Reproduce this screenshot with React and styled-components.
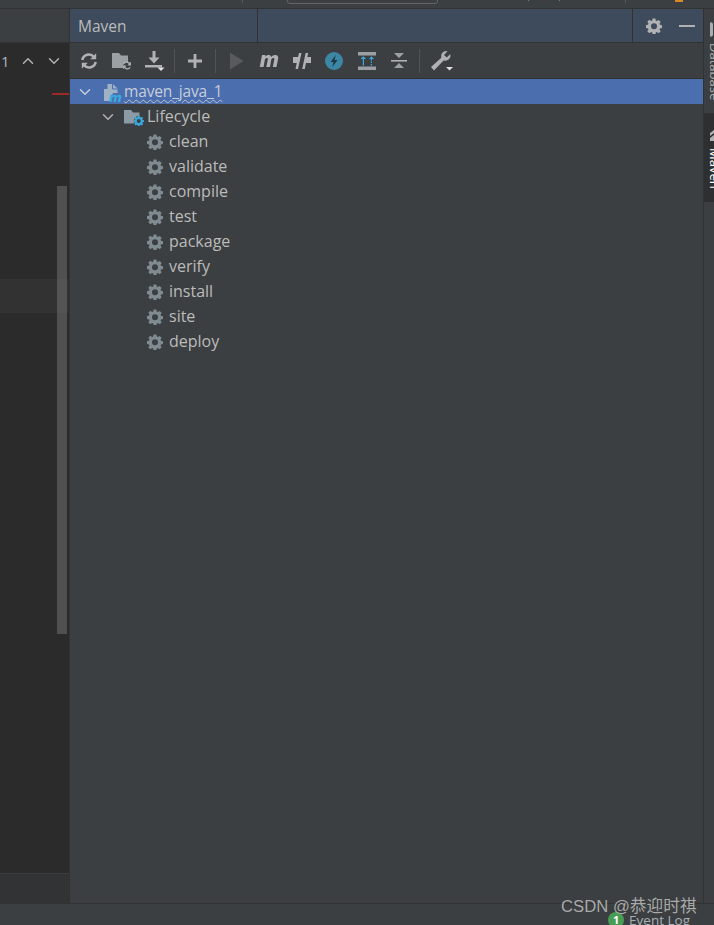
import React from "react";
import styled, { createGlobalStyle } from "styled-components";
import { ChevronDown, ChevronUp } from "lucide-react";

const GlobalStyle = createGlobalStyle`
  html, body {
    margin: 0;
    padding: 0;
    background: #3c3f41;
    overflow: hidden;
  }
`;

const Page = styled.div`
  position: relative;
  width: 714px;
  height: 925px;
  display: flex;
  flex-direction: column;
  overflow: hidden;
  background: #3c3f41;
  font-family: "Open Sans", "Noto Sans", sans-serif;
  color: #bbbbbb;
`;

const TopStrip = styled.div`
  position: relative;
  height: 8px;
  flex: none;
  background: #3c3f41;
  border-bottom: 1px solid #323232;
`;

const TopTick = styled.span`
  position: absolute;
  top: 0;
  left: ${(p) => p.$x}px;
  width: ${(p) => p.$w || 1}px;
  height: ${(p) => p.$h || 3}px;
  background: ${(p) => p.$color || "#555759"};
`;

const SearchBox = styled.div`
  position: absolute;
  left: 287px;
  top: -8px;
  width: 149px;
  height: 10px;
  border: 1px solid #646464;
  border-radius: 3px;
`;

const Main = styled.div`
  flex: 1;
  min-height: 0;
  display: flex;
`;

const EditorColumn = styled.div`
  width: 69px;
  flex: none;
  display: flex;
  flex-direction: column;
  border-right: 1px solid #323232;
`;

const EditorTabs = styled.div`
  height: 33px;
  flex: none;
  background: #3c3f41;
  border-bottom: 1px solid #323232;
`;

const EditorBar = styled.div`
  height: 35px;
  flex: none;
  background: #2b2b2b;
  display: flex;
  align-items: center;
  font-size: 15px;
  color: #a9b7c6;
  gap: 8px;
`;

const Counter = styled.span`
  margin-left: 1px;
  margin-right: 1px;
`;

const EditorBody = styled.div`
  position: relative;
  flex: 1;
  min-height: 0;
  background: #2b2b2b;
`;

const CurrentLine = styled.div`
  margin-top: 201px;
  height: 34px;
  background: #323232;
`;

const ErrorMark = styled.div`
  position: absolute;
  left: 52px;
  top: 15px;
  width: 17px;
  height: 2px;
  background: #9e2927;
`;

const Thumb = styled.div`
  position: absolute;
  left: 57px;
  top: 108px;
  width: 10px;
  height: 448px;
  background: rgba(166, 166, 166, 0.3);
`;

const EditorFooter = styled.div`
  height: 30px;
  box-sizing: border-box;
  flex: none;
  background: #313335;
  border-top: 1px solid #3a3c3e;
`;

const MavenPanel = styled.div`
  flex: 1;
  min-width: 0;
  display: flex;
  flex-direction: column;
  background: #3c3f41;
`;

const PanelHeader = styled.div`
  height: 33px;
  flex: none;
  display: flex;
  align-items: center;
  background: #3d4b5c;
  border-bottom: 1px solid #323232;
`;

const PanelTitle = styled.div`
  width: 188px;
  height: 100%;
  box-sizing: border-box;
  padding-left: 8px;
  display: flex;
  align-items: center;
  font-size: 15.5px;
  border-right: 1px solid #323232;
`;

const HeaderSpacer = styled.div`
  flex: 1;
`;

const HeaderActions = styled.div`
  width: 71px;
  height: 100%;
  display: flex;
  align-items: center;
  border-left: 1px solid #323232;
  box-sizing: border-box;
  padding-left: 13px;
  gap: 17px;
`;

const Toolbar = styled.div`
  height: 35px;
  flex: none;
  display: flex;
  align-items: center;
  padding-left: 9px;
  background: #3c3f41;
  border-bottom: 1px solid #323232;
`;

const ToolSlot = styled.div`
  width: ${(p) => p.$w}px;
  height: 24px;
  flex: none;
  display: flex;
  align-items: center;
  justify-content: center;
`;

const ToolDivider = styled.div`
  width: 1px;
  height: 24px;
  flex: none;
  margin: 0 ${(p) => p.$r}px 0 ${(p) => p.$l}px;
  background: #515355;
`;

const Tree = styled.div`
  flex: 1;
  min-height: 0;
  display: flex;
  flex-direction: column;
`;

const Row = styled.div`
  height: 25px;
  flex: none;
  display: flex;
  align-items: center;
  padding-left: ${(p) => p.$indent}px;
  font-size: 16px;
  background: ${(p) => (p.$selected ? "#4b6eaf" : "transparent")};
`;

const RowIcon = styled.span`
  width: ${(p) => p.$w}px;
  height: 20px;
  flex: none;
  display: flex;
  align-items: center;
`;

const RowLabel = styled.span`
  line-height: 20px;
  padding-bottom: 2px;
`;

const ProjectLabel = styled.span`
  font-size: 15.5px;
  line-height: 20px;
  padding-bottom: 1px;
  color: #c6cdd8;
  letter-spacing: -0.15px;
  text-decoration: underline wavy #b8c0cc 1px;
  text-underline-offset: 2px;
`;

const SideStrip = styled.div`
  width: 11px;
  box-sizing: border-box;
  flex: none;
  display: flex;
  flex-direction: column;
  overflow: hidden;
  background: #3c3f41;
  border-left: 1px solid #323232;
`;

const SideItem = styled.div`
  height: ${(p) => p.$h}px;
  flex: none;
  box-sizing: border-box;
  padding: ${(p) => p.$pad}px 0 0 2px;
  background: ${(p) => (p.$active ? "#2d2f30" : "transparent")};
  border-top: ${(p) => (p.$active ? "1px solid #323232" : "none")};
  display: flex;
  flex-direction: column;
  gap: ${(p) => p.$gap}px;
`;

const SideIcon = styled.span`
  display: block;
  flex: none;
  width: 15px;
  margin-left: 3px;
  line-height: 0;
`;

const SideText = styled.span`
  writing-mode: vertical-rl;
  font-size: 13px;
  line-height: 18px;
  width: 18px;
  color: ${(p) => (p.$active ? "#ffffff" : "#a9adb0")};
`;

const StatusBar = styled.div`
  height: 22px;
  box-sizing: border-box;
  flex: none;
  display: flex;
  align-items: flex-start;
  justify-content: flex-end;
  padding: 7px 24px 0 0;
  gap: 5px;
  background: #3c3f41;
  border-top: 1px solid #323232;
`;

const Badge = styled.span`
  width: 16px;
  height: 16px;
  margin-top: 1px;
  border-radius: 50%;
  background: #499c54;
  color: #fff;
  font-size: 11px;
  line-height: 16px;
  font-weight: 700;
  text-align: center;
`;

const StatusText = styled.span`
  font-size: 13.5px;
  line-height: 18px;
  color: #a8b0b6;
`;

const Watermark = styled.div`
  position: absolute;
  left: 561px;
  top: 895px;
  font-family: "Liberation Sans", "Noto Sans CJK SC", sans-serif;
  font-size: 16.7px;
  line-height: 24px;
  color: rgba(190, 190, 190, 0.85);
  white-space: nowrap;
`;

const GEAR_PATH =
  "M6.6 0.5h2.8l.4 2.1 1.1.5 1.8-1.2 2 2-1.2 1.8.5 1.1 2.1.4v2.8l-2.1.4-.5 1.1 1.2 1.8-2 2-1.8-1.2-1.1.5-.4 2.1H6.6l-.4-2.1-1.1-.5-1.8 1.2-2-2 1.2-1.8-.5-1.1L-.1 9.9V7.1l2.1-.4.5-1.1-1.2-1.8 2-2 1.8 1.2 1.1-.5zM8 5.3a3 3 0 1 0 0 6 3 3 0 0 0 0-6z";

const M_PATH =
  "M3 2h3.500l-.3 1.500C7.500 2.200 9 1.600 10.300 2c1 .3 1.600 1 1.800 1.900C13.500 2.400 15.200 1.600 17 2c1.800.4 2.500 1.800 2.100 3.700L17.500 14H13.800l1.500-7.600c.2-1-.1-1.500-.9-1.500-.8 0-1.700.6-2.100 1.700L11 14H7.300l1.500-7.600c.2-1-.1-1.500-.9-1.500-.8 0-1.700.6-2 1.700L4.500 14H.8z";

const GearIcon = ({ size = 16, color = "#7f8b91" }) => (
  <svg width={size} height={size} viewBox="0 0 16 16">
    <path fill={color} fillRule="evenodd" d={GEAR_PATH} />
  </svg>
);

const RefreshIcon = () => (
  <svg width="18" height="18" viewBox="0 0 18 18" fill="none" stroke="#afb1b3" strokeWidth="2.600">
    <path d="M2.300 8a6.700 6.700 0 0 1 11.600-3.200" />
    <path d="M15.700 10a6.700 6.700 0 0 1-11.600 3.200" />
    <path d="M16.200 1.200v6h-6z" fill="#afb1b3" stroke="none" />
    <path d="M1.800 16.800v-6h6z" fill="#afb1b3" stroke="none" />
  </svg>
);

const FolderRefreshIcon = () => (
  <svg width="20" height="18" viewBox="0 0 20 18">
    <path d="M0 1h7l2 2.500h7v6.500a5 5 0 0 0-5 6H0z" fill="#9aa0a4" />
    <path d="M18.200 13a3.600 3.600 0 0 0-6.400-1.400M11.800 14a3.600 3.600 0 0 0 6.400 1.400" fill="none" stroke="#afb1b3" strokeWidth="1.300" />
    <path d="M18.900 9.800v3.600h-3.400zM11.100 17.200v-3.600h3.400z" fill="#afb1b3" />
  </svg>
);

const DownloadIcon = () => (
  <svg width="20" height="20" viewBox="0 0 20 20">
    <path d="M7.500 0h3v6.500h4L9 12.500 3.500 6.500h4z" fill="#afb1b3" />
    <rect x="0" y="14" width="17" height="2.500" fill="#afb1b3" />
    <path d="M12.500 16.500h7l-3.500 3.500z" fill="#e0e0e0" />
  </svg>
);

const PlusIcon = () => (
  <svg width="14" height="14" viewBox="0 0 14 14">
    <path d="M5.600 0h2.800v5.600H14v2.800H8.400V14H5.600V8.400H0V5.600h5.600z" fill="#afb1b3" />
  </svg>
);

const PlayIcon = () => (
  <svg width="14" height="18" viewBox="0 0 14 18">
    <path d="M0 0.500 13.500 9 0 17.500z" fill="#585a5c" />
  </svg>
);

const MavenGoalIcon = () => (
  <svg width="20" height="15" viewBox="0 0 20 15">
    <path d={M_PATH} fill="#afb1b3" />
  </svg>
);

const ToggleOfflineIcon = () => (
  <svg width="18" height="16" viewBox="0 0 18 16">
    <path d="M0 4h5L6 0h2.500L5 16H2.500L3.700 10H0z" fill="#afb1b3" />
    <path d="M18 4h-3.700L15.200 0h-2.600L9.200 16h2.600l1.200-6h5z" fill="#afb1b3" />
  </svg>
);

const BoltIcon = () => (
  <svg width="18" height="18" viewBox="0 0 18 18">
    <circle cx="9" cy="9" r="9" fill="#3d87a6" />
    <path d="M10.800 3 5.500 10h3l-1.200 5 5.300-7h-3z" fill="#1c3a4a" />
  </svg>
);

const CollapseArrowsIcon = () => (
  <svg width="18" height="18" viewBox="0 0 18 18">
    <rect x="0" y="0" width="18" height="3.500" fill="#9aa0a4" />
    <rect x="0" y="14.500" width="18" height="3.500" fill="#9aa0a4" />
    <path d="M4.800 7h-2.300l2.800-2.800L8.100 7H6v6.500H4.800z" fill="#3aa7dd" />
    <path d="M13.500 4.200 16 7h-2v1.500h-1.200V7h-1.800zM12.800 9.500H14V11h-1.200zM12.800 12H14v1.500h-1.200z" fill="#3aa7dd" />
  </svg>
);

const ShowDepsIcon = () => (
  <svg width="16" height="18" viewBox="0 0 16 18">
    <path d="M0 8h16v1.600H0z" fill="#afb1b3" />
    <path d="M3 1h10L8 6zM3 16h10L8 11z" fill="#9aa0a4" />
  </svg>
);

const WrenchIcon = () => (
  <svg width="23" height="22" viewBox="0 0 23 22">
    <path
      d="M16.300 1a5.200 5.200 0 0 0-5 6.700L1 17l3 3.500 9.600-10a5.200 5.200 0 0 0 6.700-6.400L16.800 7.500 14 5l3.500-3.800z"
      fill="#afb1b3"
    />
    <path d="M16 17h7l-3.500 3.500z" fill="#e0e0e0" />
  </svg>
);

const ModuleIcon = () => (
  <svg width="20" height="20" viewBox="0 0 20 20">
    <path d="M1 7h3.500V2H10l4.500 4.500V11H10L7 19H1z" fill="#9fb3c4" />
    <path d="M9.500 2v5H14.500" fill="none" stroke="#4b6eaf" strokeWidth="1" />
    <path transform="translate(5.500 11.500) scale(0.66)" d={M_PATH} fill="#3aa7dd" />
  </svg>
);

const FolderGearIcon = () => (
  <svg width="20" height="18" viewBox="0 0 20 18">
    <path d="M0 2h7l2 2.500h6.500V8a5 5 0 0 0-5 7.500H0z" fill="#8c9aa5" />
    <g transform="translate(9.500 7.500)">
      <GearIcon size={10.5} color="#3aa7dd" />
    </g>
  </svg>
);

const DatabaseStripIcon = () => (
  <svg width="15" height="15" viewBox="0 0 15 15">
    <path d="M1 0.500h2l1 1.500v11l-1 1.500H1zM6 0.500h2l1 1.500v11l-1 1.500H6zM11 0.500h2l1 1.500v11l-1 1.500h-2z" fill="#a9adb0" />
  </svg>
);

const MavenStripIcon = () => (
  <svg width="15" height="11" viewBox="0 0 15 11">
    <path d="M1 3 5 0v3L1 6zM1 8l4-3v6H1z" fill="#afb1b3" />
  </svg>
);

const ArrowDown = ({ color = "#afb1b3" }) => <ChevronDown size={18} strokeWidth={2} color={color} />;

const phases = ["clean", "validate", "compile", "test", "package", "verify", "install", "site", "deploy"];

const App = () => {
  return (
    <Page>
      <GlobalStyle />
      <TopStrip>
        <TopTick $x={242} />
        <SearchBox />
        <TopTick $x={528} $h={1} $color="#499c54" />
        <TopTick $x={559} $h={1} $color="#499c54" />
        <TopTick $x={625} />
        <TopTick $x={675} $w={8} $h={2} $color="#d98a23" />
      </TopStrip>
      <Main>
        <EditorColumn>
          <EditorTabs />
          <EditorBar>
            <Counter>1</Counter>
            <ChevronUp size={18} strokeWidth={2} color="#afb1b3" />
            <ChevronDown size={18} strokeWidth={2} color="#afb1b3" />
          </EditorBar>
          <EditorBody>
            <ErrorMark />
            <CurrentLine />
            <Thumb />
          </EditorBody>
          <EditorFooter />
        </EditorColumn>
        <MavenPanel>
          <PanelHeader>
            <PanelTitle>Maven</PanelTitle>
            <HeaderSpacer />
            <HeaderActions>
              <GearIcon size={16} color="#afb1b3" />
              <svg width="16" height="2">
                <rect width="16" height="2" fill="#afb1b3" />
              </svg>
            </HeaderActions>
          </PanelHeader>
          <Toolbar>
            <ToolSlot $w={20}><RefreshIcon /></ToolSlot>
            <ToolSlot $w={46}><FolderRefreshIcon /></ToolSlot>
            <ToolSlot $w={20}><DownloadIcon /></ToolSlot>
            <ToolDivider $l={9} $r={9} />
            <ToolSlot $w={22}><PlusIcon /></ToolSlot>
            <ToolDivider $l={9} $r={9} />
            <ToolSlot $w={24}><PlayIcon /></ToolSlot>
            <ToolSlot $w={40}><MavenGoalIcon /></ToolSlot>
            <ToolSlot $w={26}><ToggleOfflineIcon /></ToolSlot>
            <ToolSlot $w={38}><BoltIcon /></ToolSlot>
            <ToolSlot $w={28}><CollapseArrowsIcon /></ToolSlot>
            <ToolSlot $w={36}><ShowDepsIcon /></ToolSlot>
            <ToolDivider $l={2} $r={2} />
            <ToolSlot $w={38}><WrenchIcon /></ToolSlot>
          </Toolbar>
          <Tree>
            <Row $indent={6} $selected>
              <RowIcon $w={27}><ArrowDown color="#c4ccd8" /></RowIcon>
              <RowIcon $w={21}><ModuleIcon /></RowIcon>
              <ProjectLabel>maven_java_1</ProjectLabel>
            </Row>
            <Row $indent={29}>
              <RowIcon $w={25}><ArrowDown /></RowIcon>
              <RowIcon $w={23}><FolderGearIcon /></RowIcon>
              <RowLabel>Lifecycle</RowLabel>
            </Row>
            {phases.map((name) => (
              <Row key={name} $indent={77}>
                <RowIcon $w={22}><GearIcon /></RowIcon>
                <RowLabel>{name}</RowLabel>
              </Row>
            ))}
          </Tree>
        </MavenPanel>
        <SideStrip>
          <SideItem $h={104} $pad={13} $gap={6}>
            <SideIcon><DatabaseStripIcon /></SideIcon>
            <SideText>Database</SideText>
          </SideItem>
          <SideItem $h={89} $pad={16} $gap={7} $active>
            <SideIcon><MavenStripIcon /></SideIcon>
            <SideText $active>Maven</SideText>
          </SideItem>
        </SideStrip>
      </Main>
      <StatusBar>
        <Badge>1</Badge>
        <StatusText>Event Log</StatusText>
      </StatusBar>
      <Watermark>CSDN @恭迎时祺</Watermark>
    </Page>
  );
};

export default App;
